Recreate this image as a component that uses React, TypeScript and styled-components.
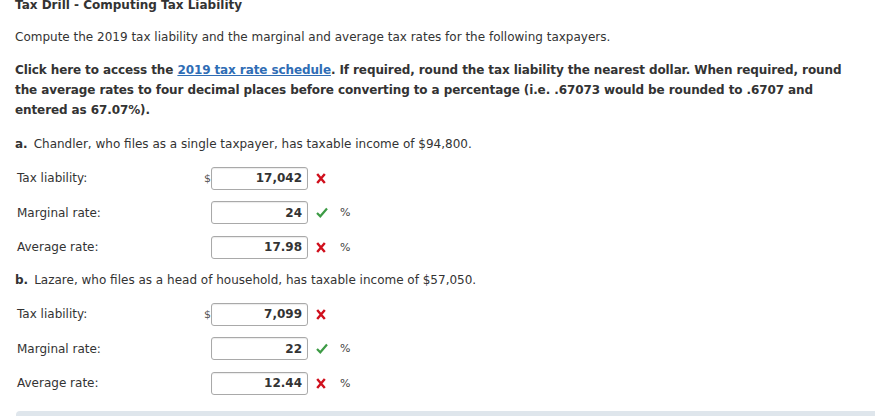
import React from "react";
import styled, { createGlobalStyle } from "styled-components";

const Global = createGlobalStyle`
  html, body { margin: 0; padding: 0; background: #fff; }
  body { font-family: "DejaVu Sans", Verdana, sans-serif; color: #333; }
`;

const Page = styled.div`
  width: 875px;
  height: 416px;
  overflow: hidden;
  padding-left: 15px;
  box-sizing: border-box;
  font-size: 12px;
`;

const Title = styled.h1`
  margin: -5px 0 0;
  font-size: 12px;
  line-height: 20px;
  font-weight: bold;
  color: #333;
`;

const Para = styled.p<{ $bold?: boolean; $top: number }>`
  margin: ${(p) => p.$top}px 0 0;
  font-size: 12px;
  line-height: 20px;
  font-weight: ${(p) => (p.$bold ? "bold" : "normal")};
  letter-spacing: ${(p) => (p.$bold ? "-0.1px" : "normal")};
  padding-right: 10px;
`;

const Link = styled.a`
  color: #2f6db5;
  text-decoration: underline;
`;

const PartLabel = styled.b`
  margin-right: 6px;
`;

const Rows = styled.div`
  display: flex;
  flex-direction: column;
  gap: 11.5px;
  margin-top: 12.5px;
  padding-left: 2px;
`;

const Row = styled.div`
  display: grid;
  grid-template-columns: 186px 8px 97px 32px 20px;
  align-items: center;
  height: 23px;
`;

const Label = styled.span`
  font-size: 12px;
`;

const Dollar = styled.span`
  font-size: 11px;
  color: #555;
  text-align: right;
`;

const Input = styled.div`
  height: 23px;
  box-sizing: border-box;
  border: 1px solid #a9a9a9;
  border-radius: 3px;
  box-shadow: inset 0 1px 1px rgba(0, 0, 0, 0.08);
  display: flex;
  align-items: center;
  justify-content: flex-end;
  padding-right: 5px;
  font-weight: bold;
  font-size: 12px;
  color: #333;
`;

const Mark = styled.span`
  display: flex;
  align-items: center;
  padding-left: 8px;
`;

const Percent = styled.span`
  font-size: 11px;
  color: #444;
`;

const Bar = styled.div`
  margin-top: 16.5px;
  margin-left: 1px;
  height: 20px;
  background: #dfe6ec;
  border-radius: 4px 0 0 0;
`;

const Cross = () => (
  <svg width="10" height="11" viewBox="0 0 10 11">
    <path d="M1.2 1 L8.8 10 M8.8 1 L1.2 10" stroke="#d0101d" strokeWidth="2.4" strokeLinecap="butt" />
  </svg>
);

const Check = () => (
  <svg width="12" height="11" viewBox="0 0 12 11">
    <path d="M1 6 L4.3 9.3 L11 1.5" stroke="#3d9b45" strokeWidth="2.2" fill="none" />
  </svg>
);

type RowData = { label: string; dollar?: boolean; value: string; ok: boolean; pct?: boolean };

const AnswerRow = ({ label, dollar, value, ok, pct }: RowData) => (
  <Row>
    <Label>{label}</Label>
    <Dollar>{dollar ? "$" : ""}</Dollar>
    <Input>{value}</Input>
    <Mark>{ok ? <Check /> : <Cross />}</Mark>
    <Percent>{pct ? "%" : ""}</Percent>
  </Row>
);

export default function App() {
  return (
    <Page>
      <Global />
      <Title>Tax Drill - Computing Tax Liability</Title>
      <Para $top={12}>
        Compute the 2019 tax liability and the marginal and average tax rates for the following taxpayers.
      </Para>
      <Para $bold $top={13}>
        Click here to access the <Link href="#">2019 tax rate schedule</Link>. If required, round the tax liability the
        nearest dollar. When required, round the average rates to four decimal places before converting to a percentage
        (i.e. .67073 would be rounded to .6707 and entered as 67.07%).
      </Para>
      <Para $top={14}>
        <PartLabel>a.</PartLabel>Chandler, who files as a single taxpayer, has taxable income of $94,800.
      </Para>
      <Rows>
        <AnswerRow label="Tax liability:" dollar value="17,042" ok={false} />
        <AnswerRow label="Marginal rate:" value="24" ok pct />
        <AnswerRow label="Average rate:" value="17.98" ok={false} pct />
      </Rows>
      <Para $top={11.5}>
        <PartLabel>b.</PartLabel>Lazare, who files as a head of household, has taxable income of $57,050.
      </Para>
      <Rows>
        <AnswerRow label="Tax liability:" dollar value="7,099" ok={false} />
        <AnswerRow label="Marginal rate:" value="22" ok pct />
        <AnswerRow label="Average rate:" value="12.44" ok={false} pct />
      </Rows>
      <Bar />
    </Page>
  );
}
